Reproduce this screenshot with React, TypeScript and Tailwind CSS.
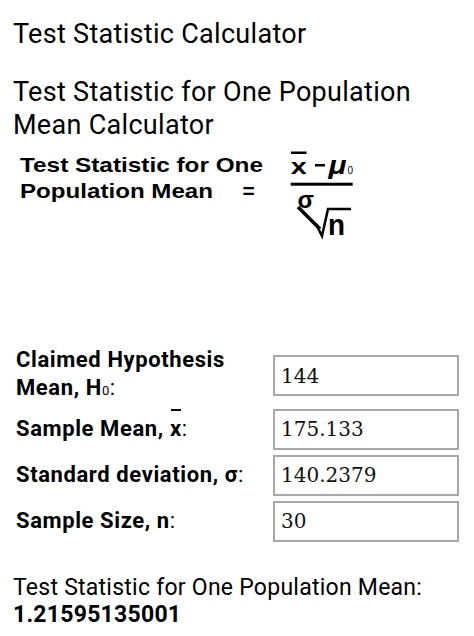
import React from "react";

const serif = { fontFamily: '"DejaVu Serif", "Liberation Serif", serif' };

function Formula() {
  // picture of the formula, coordinates are page x - 13, page y - 145
  return (
    <svg width="360" height="100" viewBox="0 0 360 100" className="block">
      <g fontFamily="'Liberation Sans', Arial, sans-serif" fontWeight="700" fill="#000">
        <text x="7" y="26.7" fontSize="21" textLength="243" lengthAdjust="spacingAndGlyphs">
          Test Statistic for One
        </text>
        <text x="7" y="53.3" fontSize="21" textLength="193" lengthAdjust="spacingAndGlyphs">
          Population Mean
        </text>
        <text x="229.5" y="53.3" fontSize="21">=</text>

        {/* numerator */}
        <rect x="278" y="6.5" width="15.5" height="2.5" />
        <text x="277.7" y="29.3" fontSize="22" textLength="16" lengthAdjust="spacingAndGlyphs">x</text>
        <rect x="302" y="19" width="10" height="2.5" />
        <text x="315.5" y="29.3" fontSize="26" fontStyle="italic" textLength="18" lengthAdjust="spacingAndGlyphs">
          μ
        </text>
        <text x="334.5" y="29.3" fontSize="10" fontWeight="400">0</text>

        {/* fraction bar */}
        <rect x="277.7" y="37.7" width="62" height="3" />

        {/* denominator */}
        <text x="284.5" y="62.7" fontSize="24" textLength="16.5" lengthAdjust="spacingAndGlyphs">σ</text>
        <line x1="285" y1="62" x2="307" y2="84" stroke="#000" strokeWidth="3.5" />
        <polyline points="303,79 309,91 315,64 338,64" fill="none" stroke="#000" strokeWidth="2.5" />
        <text x="315" y="90" fontSize="30" textLength="17" lengthAdjust="spacingAndGlyphs">n</text>
      </g>
    </svg>
  );
}

function Row({
  label,
  value,
  tall,
}: {
  label: React.ReactNode;
  value: string;
  tall?: boolean;
}) {
  return (
    <div className={`grid grid-cols-[257px_186px] items-center ${tall ? "h-[61px]" : "h-[46px]"}`}>
      <div className="text-[22px] font-bold leading-[28px] tracking-[0.6px]">{label}</div>
      <input
        readOnly
        value={value}
        style={serif}
        className="h-[41px] w-[186px] border-2 border-[#a7a7a7] bg-white px-[6px] text-[20px] text-[#111] outline-none"
      />
    </div>
  );
}

export default function App() {
  return (
    <main
      className="min-h-[636px] bg-white px-[13px] pt-[18px] text-black"
      style={{ fontFamily: 'Roboto, "Noto Sans", sans-serif' }}
    >
      <h1 className="text-[27px] font-normal leading-[33px] tracking-[0.3px]">Test Statistic Calculator</h1>

      <h2 className="mt-[25px] text-[27px] font-normal leading-[33px] tracking-[0.3px]">
        Test Statistic for One Population Mean Calculator
      </h2>

      <div className="mt-[3px]">
        <Formula />
      </div>

      <div className="ml-[3px] mt-[100px]">
        <Row
          tall
          value="144"
          label={
            <>
              Claimed Hypothesis
              <br />
              Mean, H<span className="text-[13px] font-normal">0</span>
              <span className="font-normal">:</span>
            </>
          }
        />
        <Row
          value="175.133"
          label={
            <>
              Sample Mean,{" "}
              <span className="relative">
                x<span className="absolute left-[1px] right-[1px] top-[-7px] h-[2px] bg-black" />
              </span>
              <span className="font-normal">:</span>
            </>
          }
        />
        <Row
          value="140.2379"
          label={
            <>
              Standard deviation, σ<span className="font-normal">:</span>
            </>
          }
        />
        <Row
          value="30"
          label={
            <>
              Sample Size, n<span className="font-normal">:</span>
            </>
          }
        />
      </div>

      <div className="mt-[30px] text-[23px] leading-[27px] tracking-[0.25px]">
        <div>Test Statistic for One Population Mean:</div>
        <div className="font-bold">1.21595135001</div>
      </div>
    </main>
  );
}
